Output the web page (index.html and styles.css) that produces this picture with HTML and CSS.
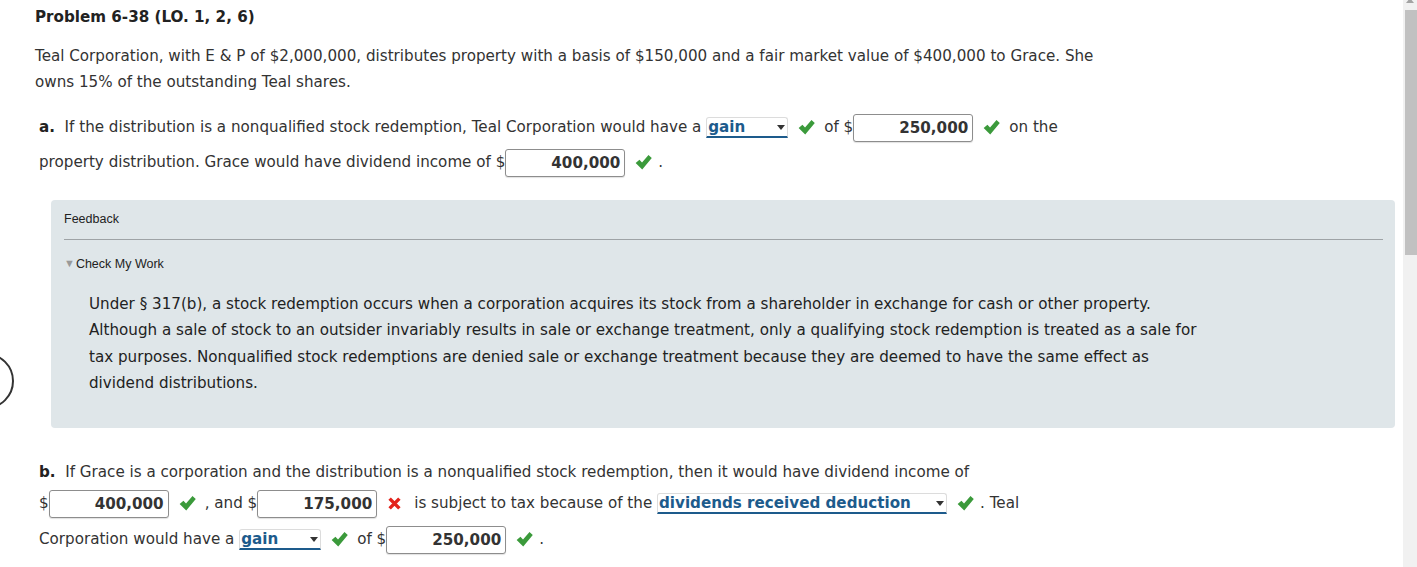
FILE: index.html
```html
<!DOCTYPE html>
<html lang="en">
<head>
<meta charset="utf-8">
<title>Problem 6-38</title>
<link rel="stylesheet" href="styles.css">
</head>
<body>
<div class="page">
  <h1 class="title">Problem 6-38 (LO. 1, 2, 6)</h1>
  <p class="intro">Teal Corporation, with E &amp; P of $2,000,000, distributes property with a basis of $150,000 and a fair market value of $400,000 to Grace. She<br>owns 15% of the outstanding Teal shares.</p>

  <div class="part part-a">
    <div class="line la1"><b class="lbl">a.</b>&nbsp; If the distribution is a nonqualified stock redemption, Teal Corporation would have a <span class="sel sel-gain">gain<svg class="caret" viewBox="0 0 8 5"><path d="M0 0h8L4 5z"/></svg></span><svg class="ok" viewBox="0 0 16 16"><path d="M0.6 8.4 4.2 5.3 6.6 8.1 12.7 0.9 15.8 3.8 6.8 14.6z"/></svg>of $<span class="box">250,000</span><svg class="ok" viewBox="0 0 16 16"><path d="M0.6 8.4 4.2 5.3 6.6 8.1 12.7 0.9 15.8 3.8 6.8 14.6z"/></svg>on the</div>
    <div class="line la2">property distribution. Grace would have dividend income of $<span class="box">400,000</span><svg class="ok before-dot" viewBox="0 0 16 16"><path d="M0.6 8.4 4.2 5.3 6.6 8.1 12.7 0.9 15.8 3.8 6.8 14.6z"/></svg>.</div>
  </div>

  <section class="feedback">
    <div class="fb-head">Feedback</div>
    <hr class="fb-rule">
    <div class="fb-toggle"><span class="tri">&#9660;</span>Check My Work</div>
    <p class="fb-text">Under § 317(b), a stock redemption occurs when a corporation acquires its stock from a shareholder in exchange for cash or other property.<br>Although a sale of stock to an outsider invariably results in sale or exchange treatment, only a qualifying stock redemption is treated as a sale for<br>tax purposes. Nonqualified stock redemptions are denied sale or exchange treatment because they are deemed to have the same effect as<br>dividend distributions.</p>
  </section>

  <div class="part part-b">
    <div class="line lb1"><b class="lbl">b.</b>&nbsp; If Grace is a corporation and the distribution is a nonqualified stock redemption, then it would have dividend income of</div>
    <div class="line lb2">$<span class="box">400,000</span><svg class="ok" viewBox="0 0 16 16"><path d="M0.6 8.4 4.2 5.3 6.6 8.1 12.7 0.9 15.8 3.8 6.8 14.6z"/></svg>, and $<span class="box">175,000</span><svg class="bad" viewBox="0 0 12 12"><path d="M1.5 1.5 10.5 10.5M10.5 1.5 1.5 10.5"/></svg>is subject to tax because of the <span class="sel sel-drd">dividends received deduction<svg class="caret" viewBox="0 0 8 5"><path d="M0 0h8L4 5z"/></svg></span><svg class="ok before-dot" viewBox="0 0 16 16"><path d="M0.6 8.4 4.2 5.3 6.6 8.1 12.7 0.9 15.8 3.8 6.8 14.6z"/></svg>. Teal</div>
    <div class="line lb3">Corporation would have a <span class="sel sel-gain">gain<svg class="caret" viewBox="0 0 8 5"><path d="M0 0h8L4 5z"/></svg></span><svg class="ok" viewBox="0 0 16 16"><path d="M0.6 8.4 4.2 5.3 6.6 8.1 12.7 0.9 15.8 3.8 6.8 14.6z"/></svg>of $<span class="box">250,000</span><svg class="ok before-dot" viewBox="0 0 16 16"><path d="M0.6 8.4 4.2 5.3 6.6 8.1 12.7 0.9 15.8 3.8 6.8 14.6z"/></svg>.</div>
  </div>
</div>

<div class="edge-circle"></div>
<div class="scrollbar"><div class="sb-arrow"></div><div class="sb-thumb"></div></div>
</body>
</html>
```

FILE: styles.css
```css
html, body {
  margin: 0;
  padding: 0;
  background: #fff;
}
body {
  font-family: "DejaVu Sans", Verdana, sans-serif;
  font-size: 15.15px;
  color: #333;
  overflow: hidden;
  width: 1417px;
  height: 567px;
  position: relative;
}
.page {
  padding: 7px 22px 0 35px;
}
.title {
  margin: 0;
  font-size: 15.15px;
  line-height: 20px;
  font-weight: bold;
  color: #222;
}
.intro {
  margin: 16px 0 0;
  line-height: 26px;
  white-space: nowrap;
}
.part {
  padding-left: 4px;
  white-space: nowrap;
}
.part-a {
  margin-top: 15px;
}
.line {
  line-height: 34px;
  height: 34px;
}
.la2 {
  height: 36px;
  line-height: 36px;
}
.lbl {
  color: #222;
}
.box {
  display: inline-block;
  box-sizing: border-box;
  width: 120px;
  height: 28px;
  line-height: 26px;
  border: 1px solid #8d8d8d;
  border-radius: 3px;
  padding-right: 4px;
  text-align: right;
  font-weight: bold;
  color: #333;
  vertical-align: middle;
  box-shadow: 0 1px 1px rgba(0,0,0,0.12);
  background: #fff;
}
.sel {
  display: inline-flex;
  align-items: center;
  justify-content: space-between;
  box-sizing: border-box;
  height: 21px;
  padding: 0 2px 0 1px;
  border: 1px solid #dcdcdc;
  border-bottom: 2px solid #1d5b8c;
  border-radius: 3px 3px 0 0;
  color: #1d5b8c;
  font-weight: bold;
  line-height: 18px;
  vertical-align: middle;
  background: #fff;
}
.sel-gain { width: 82px; }
.sel-drd { width: 290px; }
.caret {
  width: 8px;
  height: 5px;
  fill: #333;
}
.ok {
  width: 17px;
  height: 17px;
  fill: #3b9a3b;
  margin: 0 9px 0 10px;
  vertical-align: middle;
}
.ok.before-dot {
  margin-right: 6px;
}
.bad {
  width: 13px;
  height: 13px;
  stroke: #e3241c;
  stroke-width: 3.2;
  fill: none;
  margin: 0 13px 0 11px;
  vertical-align: middle;
}
.feedback {
  margin: 20px 0 0 16px;
  background: #dfe6e9;
  border-radius: 4px;
  padding: 10px 12px 32px 13px;
  color: #222;
}
.fb-head {
  font-family: "Liberation Sans", Arial, sans-serif;
  font-size: 12.5px;
  line-height: 18px;
}
.fb-rule {
  margin: 11px 0 0;
  border: 0;
  border-top: 1px solid #9ea3a6;
  height: 0;
}
.fb-toggle {
  margin-top: 14px;
  font-family: "Liberation Sans", Arial, sans-serif;
  font-size: 12.5px;
  line-height: 18px;
}
.tri {
  font-size: 11px;
  color: #999;
  vertical-align: 1px;
  margin-right: 1px;
}
.fb-text {
  margin: 18px 0 0 25px;
  line-height: 26.3px;
  white-space: nowrap;
}
.part-b {
  margin-top: 31px;
}
.lb1 {
  height: 26px;
  line-height: 26px;
}
.lb2, .lb3 {
  height: 36px;
  line-height: 36px;
}
.edge-circle {
  position: absolute;
  left: -42px;
  top: 353px;
  width: 52px;
  height: 52px;
  border: 2.5px solid #333;
  border-radius: 50%;
}
.scrollbar {
  position: fixed;
  top: 0;
  right: 0;
  width: 14px;
  height: 567px;
  background: #f1f1f1;
}
.sb-arrow {
  position: absolute;
  left: 3px;
  top: -2px;
  width: 0;
  height: 0;
  border-left: 4px solid transparent;
  border-right: 4px solid transparent;
  border-bottom: 5px solid #a3a3a3;
}
.sb-thumb {
  position: absolute;
  left: 2px;
  right: 0;
  top: 10px;
  height: 245px;
  background: #c1c1c1;
}
```
